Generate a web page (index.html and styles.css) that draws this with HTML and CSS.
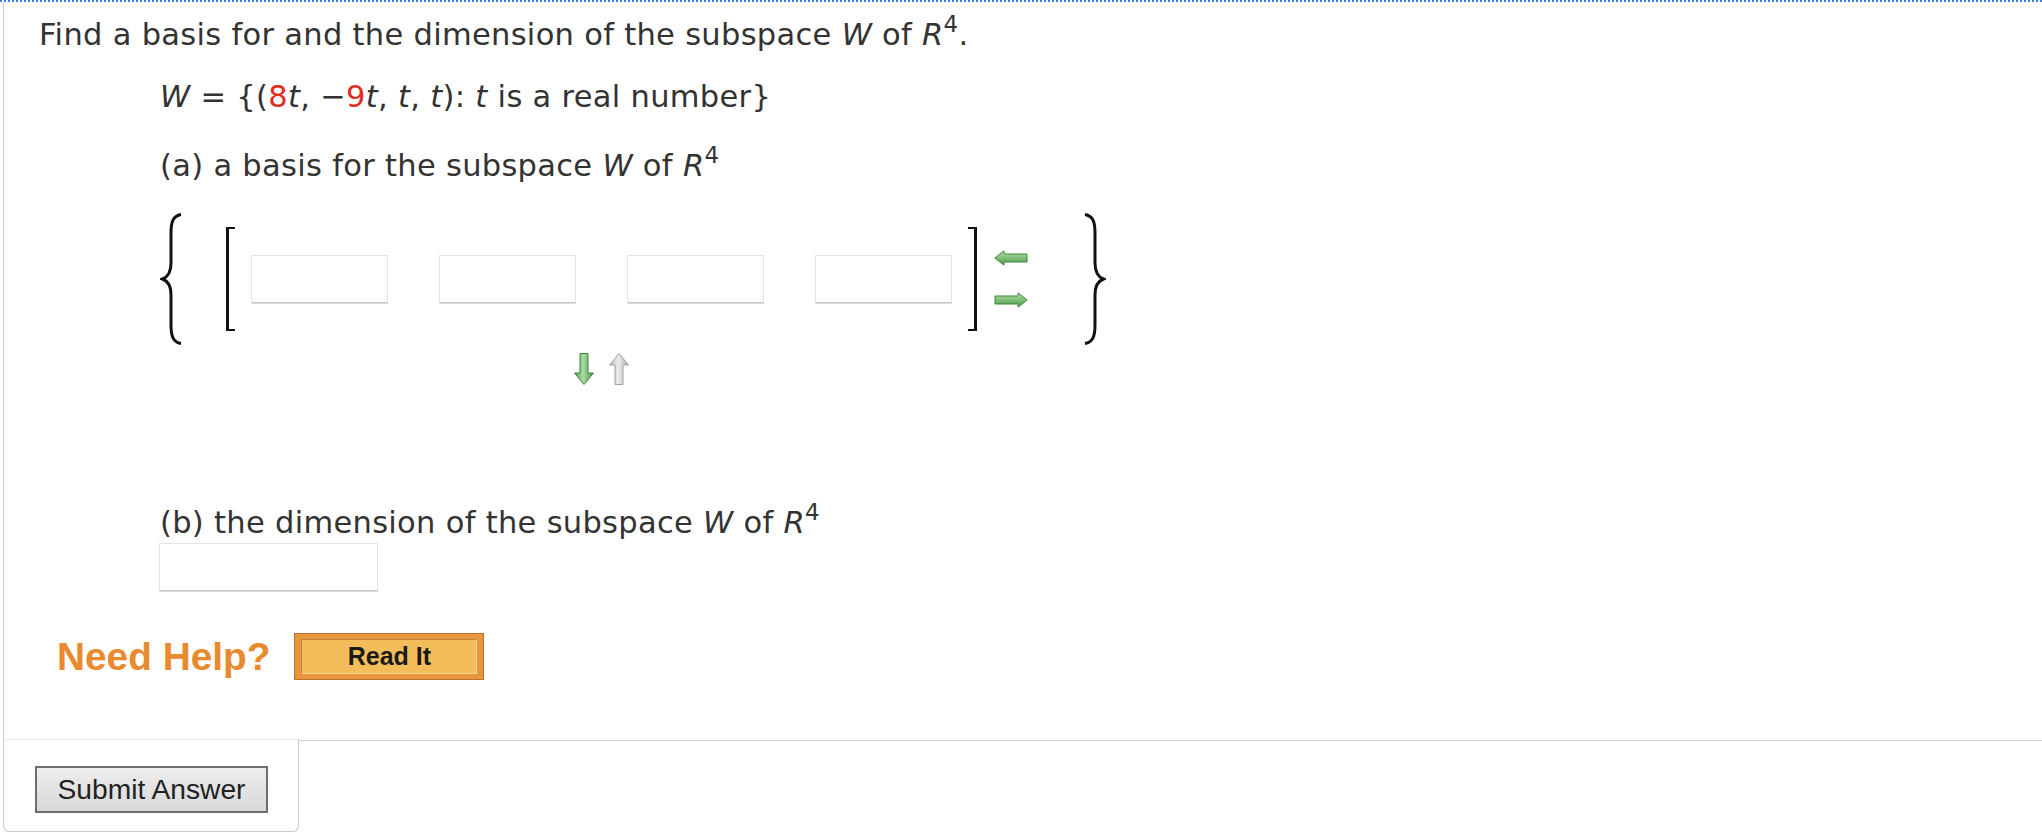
FILE: index.html
```html
<!DOCTYPE html>
<html lang="en">
<head>
    <meta charset="UTF-8">
    <title>Basis and Dimension</title>
    <link rel="stylesheet" href="styles.css">
</head>
<body>
    <div class="page">
        <section class="question">
            <p class="prompt">Find a basis for and the dimension of the subspace <i>W</i> of <i>R</i><sup>4</sup>.</p>

            <div class="indent">
                <p class="set-line"><i>W</i> = {(<span class="given">8</span><i>t</i>, −<span class="given">9</span><i>t</i>, <i>t</i>, <i>t</i>): <i>t</i> is a real number}</p>

                <p class="part-a">(a) a basis for the subspace <i>W</i> of <i>R</i><sup>4</sup></p>

                <div class="basis">
                    <svg class="brace" width="24" height="132" viewBox="0 0 24 132">
                        <path d="M21 1.5 C13 3 11 9 11 20 L11 50 C11 60 8 64 2.5 66 C8 68 11 72 11 82 L11 112 C11 123 13 129 21 130.5"/>
                    </svg>

                    <div class="vector-col">
                        <div class="vector">
                            <span class="bracket left"></span>
                            <input type="text" class="cell">
                            <input type="text" class="cell">
                            <input type="text" class="cell">
                            <input type="text" class="cell">
                            <span class="bracket right"></span>
                        </div>
                        <div class="move-arrows">
                            <!-- add row / remove row -->
                            <svg width="20" height="32" viewBox="0 0 20 32">
                                <defs>
                                    <linearGradient id="gDown" x1="0" y1="0" x2="1" y2="0">
                                        <stop offset="0" stop-color="#4f9d49"/>
                                        <stop offset="0.45" stop-color="#a9dca3"/>
                                        <stop offset="1" stop-color="#4a9444"/>
                                    </linearGradient>
                                </defs>
                                <path d="M6 0.5 H14 V20 H19.5 L10 31.5 L0.5 20 H6 Z" fill="url(#gDown)" stroke="#3d8439" stroke-width="1"/>
                            </svg>
                            <svg width="20" height="32" viewBox="0 0 20 32">
                                <defs>
                                    <linearGradient id="gUp" x1="0" y1="0" x2="1" y2="0">
                                        <stop offset="0" stop-color="#b5b5b5"/>
                                        <stop offset="0.45" stop-color="#ececec"/>
                                        <stop offset="1" stop-color="#b0b0b0"/>
                                    </linearGradient>
                                </defs>
                                <path d="M6 31.5 H14 V12 H19.5 L10 0.5 L0.5 12 H6 Z" fill="url(#gUp)" stroke="#a3a3a3" stroke-width="1"/>
                            </svg>
                        </div>
                    </div>

                    <div class="side-arrows">
                        <svg width="34" height="16" viewBox="0 0 34 16">
                            <defs>
                                <linearGradient id="gSide" x1="0" y1="0" x2="0" y2="1">
                                    <stop offset="0" stop-color="#b5e2ae"/>
                                    <stop offset="1" stop-color="#4b9a45"/>
                                </linearGradient>
                            </defs>
                            <path d="M0.8 8 L10 0.8 V4 H33 V12 H10 V15.2 Z" fill="url(#gSide)" stroke="#3f8a3b" stroke-width="1"/>
                        </svg>
                        <svg width="34" height="16" viewBox="0 0 34 16">
                            <path d="M33.2 8 L24 0.8 V4 H1 V12 H24 V15.2 Z" fill="url(#gSide)" stroke="#3f8a3b" stroke-width="1"/>
                        </svg>
                    </div>

                    <svg class="brace right-brace" width="24" height="132" viewBox="0 0 24 132">
                        <path d="M3 1.5 C11 3 13 9 13 20 L13 50 C13 60 16 64 21.5 66 C16 68 13 72 13 82 L13 112 C13 123 11 129 3 130.5"/>
                    </svg>
                </div>

                <p class="part-b">(b) the dimension of the subspace <i>W</i> of <i>R</i><sup>4</sup></p>
                <input type="text" class="dimension">
            </div>

            <div class="help">
                <span class="need-help">Need Help?</span>
                <button type="button" class="read-it"><span>Read It</span></button>
            </div>
        </section>

        <div class="submit-row">
            <div class="submit-tab">
                <button type="button" class="submit-button">Submit Answer</button>
            </div>
            <div class="submit-filler"></div>
        </div>
    </div>
</body>
</html>
```

FILE: styles.css
```css
body {
    margin: 0;
    padding: 0;
    background-color: #ffffff;
    font-family: "DejaVu Sans", Verdana, sans-serif;
    color: #333333;
}

.page {
    border-top: 2px dotted #3a7fdc;
    padding-left: 3px;
}

.question {
    border-left: 1px solid #cccccc;
    padding: 15px 0 59px 35px;
    font-size: 30.5px;
    letter-spacing: 0.3px;
    line-height: 36px;
}

.question p {
    margin: 0;
}

.question sup {
    font-size: 0.75em;
    line-height: 0;
    vertical-align: 0.55em;
}

.given {
    color: #e32b1f;
}

.indent {
    margin-left: 121px;
}

.set-line {
    margin-top: 26px !important;
}

.part-a {
    margin-top: 33px !important;
}

/* vector input block */
.basis {
    display: flex;
    align-items: flex-start;
    margin-top: 29px;
}

.brace path {
    fill: none;
    stroke: #111111;
    stroke-width: 3;
}

.vector-col {
    margin-left: 42px;
    display: flex;
    flex-direction: column;
}

.vector {
    display: flex;
    align-items: center;
    height: 132px;
}

.bracket {
    display: block;
    width: 6px;
    height: 100px;
    border: 3px solid #111111;
    border-top-width: 2px;
    border-bottom-width: 2px;
}

.bracket.left {
    border-right: none;
    margin-right: 16px;
}

.bracket.right {
    border-left: none;
    margin-left: 16px;
}

.cell, .dimension {
    box-sizing: border-box;
    height: 48px;
    border: 1px solid #e4e4e4;
    border-bottom: 1px solid #c6c6c6;
    box-shadow: 0 1px 0 #dddddd;
    background-color: #ffffff;
    padding: 0 8px;
    font-size: 24px;
    margin: 0;
}

.cell {
    width: 137px;
}

.cell + .cell {
    margin-left: 51px;
}

.move-arrows {
    display: flex;
    justify-content: center;
    gap: 15px;
    margin-top: 8px;
}

.side-arrows {
    height: 132px;
    margin-left: 17px;
    display: flex;
    flex-direction: column;
    justify-content: center;
    gap: 26px;
}

.side-arrows svg {
    display: block;
}

.right-brace {
    margin-left: 54px;
}

.part-b {
    margin-top: 120px !important;
}

.dimension {
    display: block;
    width: 219px;
    margin-top: 2px;
    margin-left: -1px;
}

/* help row */
.help {
    display: flex;
    align-items: center;
    margin-top: 42px;
    margin-left: 18px;
    letter-spacing: 0;
}

.need-help {
    font-family: "Liberation Sans", Arial, sans-serif;
    font-weight: bold;
    font-size: 38.8px;
    color: #e98a2e;
}

.read-it {
    margin-left: 24px;
    width: 190px;
    height: 47px;
    padding: 5px 6px;
    border: 1px solid #b8732c;
    background-color: #e8963e;
    box-sizing: border-box;
    cursor: pointer;
}

.read-it span {
    display: block;
    height: 100%;
    box-sizing: border-box;
    border: 1px solid #c7803a;
    border-right-color: #f7d58f;
    border-bottom-color: #f7d58f;
    background-color: #f3bd59;
    font-family: "Liberation Sans", Arial, sans-serif;
    font-weight: bold;
    font-size: 25px;
    line-height: 32px;
    color: #1a1a1a;
}

/* submit area */
.submit-row {
    display: flex;
}

.submit-tab {
    width: 296px;
    border: 1px solid #cccccc;
    border-top-color: #ececec;
    border-radius: 0 0 6px 6px;
    padding: 26px 0 18px 31px;
    box-sizing: border-box;
}

.submit-filler {
    flex: 1;
    border-top: 1px solid #cccccc;
    margin-top: 1px;
}

.submit-button {
    width: 233px;
    height: 47px;
    border: 2px solid #6e6e6e;
    background: linear-gradient(#eeeeee, #d8d8d8);
    font-family: "Liberation Sans", Arial, sans-serif;
    font-size: 28.2px;
    color: #222222;
    cursor: pointer;
    padding: 0;
}
```
